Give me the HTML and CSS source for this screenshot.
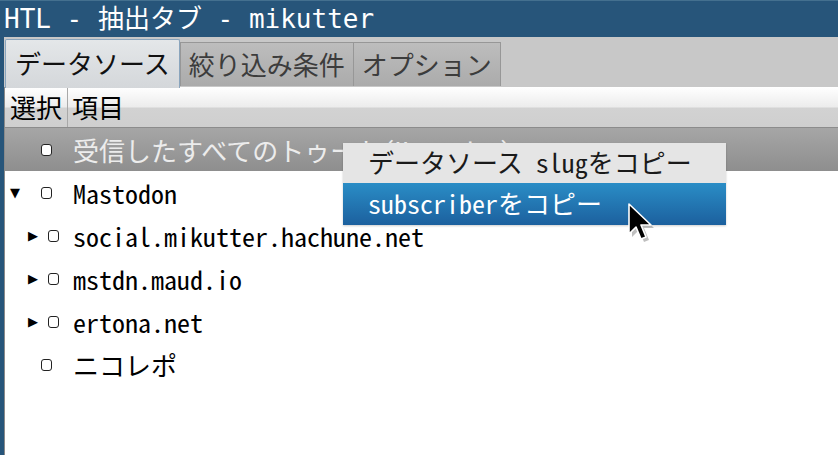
FILE: index.html
```html
<!DOCTYPE html>
<html lang="ja">
<head>
<meta charset="utf-8">
<title>HTL - 抽出タブ - mikutter</title>
<link rel="stylesheet" href="styles.css">
</head>
<body>
<div class="titlebar">HTL - 抽出タブ - mikutter</div>
<div class="window">
  <div class="tabs">
    <div class="tab active">データソース</div>
    <div class="tab">絞り込み条件</div>
    <div class="tab">オプション</div>
  </div>
  <div class="page">
    <div class="header">
      <div class="col-select">選択</div>
      <div class="col-item">項目</div>
    </div>
    <div class="tree">
      <div class="row selected">
        <span class="exp"></span><span class="check"></span><span class="label">受信したすべてのトゥート(Mastodon)</span>
      </div>
      <div class="row">
        <span class="exp">▼</span><span class="check"></span><span class="label">Mastodon</span>
      </div>
      <div class="row child">
        <span class="exp">▶</span><span class="check"></span><span class="label">social.mikutter.hachune.net</span>
      </div>
      <div class="row child">
        <span class="exp">▶</span><span class="check"></span><span class="label">mstdn.maud.io</span>
      </div>
      <div class="row child">
        <span class="exp">▶</span><span class="check"></span><span class="label">ertona.net</span>
      </div>
      <div class="row">
        <span class="exp"></span><span class="check"></span><span class="label">ニコレポ</span>
      </div>
    </div>
  </div>
</div>
<div class="menu">
  <div class="menu-item">データソース slugをコピー</div>
  <div class="menu-item hover">subscriberをコピー</div>
</div>
<svg class="cursor" width="30" height="44" viewBox="0 0 30 44">
  <path d="M3 2 L3 32 L10 25 L15 37 L20 35 L15 23 L25 23 Z" fill="rgba(0,0,0,0.25)" transform="translate(2,2)"/>
  <path d="M2 1 L2 31 L9 24 L14 36 L19 34 L14 22 L24 22 Z" fill="#000" stroke="#fff" stroke-width="1.6" stroke-linejoin="round"/>
</svg>
</body>
</html>
```
FILE: styles.css
```css
html, body {
  margin: 0;
  padding: 0;
}
body {
  width: 838px;
  height: 455px;
  overflow: hidden;
  background: #c8c8c8;
  position: relative;
  font-family: "Noto Sans CJK JP", "DejaVu Sans Mono", monospace;
  font-feature-settings: "hwid" 1;
  font-size: 26px;
  color: #000;
}
.titlebar {
  height: 36px;
  border-top: 1px solid #44708f;
  background: #27557a;
  color: #fff;
  font-family: "DejaVu Sans Mono", "Noto Sans CJK JP", monospace;
  font-feature-settings: normal;
  font-size: 26px;
  line-height: 36px;
  padding-left: 4px;
  white-space: nowrap;
}
.window {
  border-left: 4px solid #27557a;
  height: 418px;
  display: flex;
  flex-direction: column;
}
.tabs {
  display: flex;
  align-items: flex-start;
  height: 50px;
  padding-left: 1px;
  position: relative;
  z-index: 1;
}
.tab {
  box-sizing: border-box;
  margin-top: 5px;
  height: 44px;
  padding: 0 8px;
  background: linear-gradient(#bdbdbd, #ababab);
  border: 1px solid #979797;
  border-bottom: none;
  color: #3c3c3c;
  line-height: 42px;
  white-space: nowrap;
}
.tab + .tab {
  margin-left: -1px;
}
.tab.active {
  margin-top: 2px;
  height: 49px;
  padding: 0 9px;
  background: linear-gradient(#e4e7e9, #d4d7da);
  border: 1px solid #8aa5bd;
  border-bottom: none;
  border-radius: 2px 2px 0 0;
  color: #111;
  line-height: 46px;
  margin-right: 1px;
}
.page {
  flex: 1;
  background: #fff;
  border-left: 1px solid #8a8a8a;
  display: flex;
  flex-direction: column;
}
.header {
  display: flex;
  height: 40px;
  background: linear-gradient(#ffffff 0, #ececec 20px, #d2d2d2 21px, #cfcfcf 40px);
  border-bottom: 1px solid #8c8c8c;
  line-height: 40px;
}
.col-select {
  width: 63px;
  box-sizing: border-box;
  padding-left: 5px;
  border-right: 1px solid #a8a8a8;
}
.col-item {
  padding-left: 4px;
}
.tree {
  display: flex;
  flex-direction: column;
}
.row {
  display: flex;
  align-items: center;
  height: 43px;
  white-space: nowrap;
}
.row.selected {
  background: linear-gradient(#a6a6a6, #8e8e8e);
  color: #ececec;
}
.exp {
  width: 10px;
  margin-left: 5px;
  font-size: 13px;
  font-family: "DejaVu Sans", sans-serif;
  line-height: 1;
  text-align: center;
}
.check {
  box-sizing: border-box;
  width: 11px;
  height: 12px;
  border: 1.5px solid #222;
  border-radius: 3px;
  background: #fff;
  margin-left: 21px;
}
.label {
  margin-left: 21px;
}
.row.child .exp {
  margin-left: 23px;
}
.row.child .check {
  margin-left: 10px;
}
.row.child .label {
  margin-left: 14px;
}
.menu {
  position: absolute;
  left: 343px;
  top: 143px;
  width: 383px;
  box-shadow: 0 1px 2px rgba(0,0,0,0.2);
}
.menu-item {
  height: 40px;
  line-height: 38px;
  padding-left: 25px;
  background: #e5e5e5;
  color: #1a1a1a;
  white-space: nowrap;
}
.menu-item.hover {
  height: 42px;
  line-height: 40px;
  background: linear-gradient(#2a8dc6, #1c609e);
  color: #fff;
}
.cursor {
  position: absolute;
  left: 627px;
  top: 203px;
}
```
